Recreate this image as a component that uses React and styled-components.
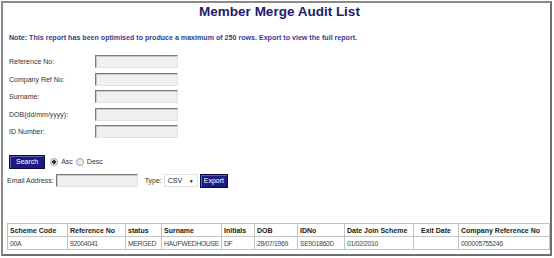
import React from 'react';
import styled, { createGlobalStyle } from 'styled-components';

const Global = createGlobalStyle`
  body {
    margin: 0;
    background: #fff;
    font-family: "Liberation Sans", Arial, sans-serif;
  }
`;

const fields = ['Reference No:', 'Company Ref No:', 'Surname:', 'DOB(dd/mm/yyyy):', 'ID Number:'];

const columns = [
  { title: 'Scheme Code', width: 60 },
  { title: 'Reference No', width: 58 },
  { title: 'status', width: 36 },
  { title: 'Surname', width: 60 },
  { title: 'Initials', width: 33 },
  { title: 'DOB', width: 43 },
  { title: 'IDNo', width: 47 },
  { title: 'Date Join Scheme', width: 69 },
  { title: 'Exit Date', width: 45, center: true },
  { title: 'Company Reference No', width: 91 },
];

const row = ['00A', '92004041', 'MERGED', 'HAUFWEDHOUSE', 'DF', '28/07/1969', 'SE901860D', '01/02/2010', '', '000005755246'];

export default function App() {
  return (
    <>
      <Global />
      <Frame>
        <Title>Member Merge Audit List</Title>
        <Note>Note: This report has been optimised to produce a maximum of 250 rows. Export to view the full report.</Note>
        <Form>
          {fields.map(f => (
            <React.Fragment key={f}>
              <Label>{f}</Label>
              <Field />
            </React.Fragment>
          ))}
        </Form>
        <Controls>
          <Button pad={6}>Search</Button>
          <Radio checked />
          <Small>Asc</Small>
          <Radio />
          <Small>Desc</Small>
        </Controls>
        <ExportRow>
          <Small>Email Address:</Small>
          <Field width={82} />
          <Small pad={5}>Type:</Small>
          <Select>
            <span>CSV</span>
            <Arrow>▼</Arrow>
          </Select>
          <Button pad={3}>Export</Button>
        </ExportRow>
        <Table>
          <colgroup>
            {columns.map(c => <col key={c.title} style={{ width: c.width }} />)}
          </colgroup>
          <thead>
            <tr>
              {columns.map(c => <Th key={c.title} center={c.center}>{c.title}</Th>)}
            </tr>
          </thead>
          <tbody>
            <tr>
              {row.map((v, i) => <Td key={i}>{v}</Td>)}
            </tr>
          </tbody>
        </Table>
      </Frame>
    </>
  );
}

const Frame = styled.div`
  margin: 1px 0 0 1px;
  width: 551px;
  height: 255px;
  box-sizing: border-box;
  border: 2px solid #8a8a8a;
  border-right-color: #6f6f6f;
  border-bottom-color: #6f6f6f;
  padding: 1px 4px 0 4px;
  display: flex;
  flex-direction: column;
`;

const Title = styled.div`
  text-align: center;
  font-weight: bold;
  font-size: 13.5px;
  line-height: 16px;
  color: #1c1c6c;
  padding-left: 6px;
`;

const Note = styled.div`
  margin-top: 13px;
  padding-left: 2px;
  font-weight: bold;
  font-size: 7.1px;
  line-height: 10px;
  color: #3b3b8e;
`;

const Form = styled.div`
  margin-top: 10px;
  padding-left: 2px;
  display: grid;
  grid-template-columns: 86px 84px;
  grid-auto-rows: 17.5px;
  align-items: center;
`;

const Label = styled.span`
  font-size: 7px;
  color: #333;
`;

const Field = styled.div`
  width: ${p => p.width || 83}px;
  height: 13px;
  box-sizing: border-box;
  background: #f0f0f0;
  border-top: 1px solid #7a7a7a;
  border-left: 1px solid #7a7a7a;
  border-right: 1px solid #e2e2e2;
  border-bottom: 1px solid #e2e2e2;
  box-shadow: inset 1px 1px 0 #c8c8c8;
`;

const Controls = styled.div`
  margin-top: 14px;
  padding-left: 2px;
  display: flex;
  align-items: center;
  gap: 3px;
`;

const ExportRow = styled.div`
  margin-top: 5px;
  display: flex;
  align-items: center;
  gap: 2px;
`;

const Small = styled.span`
  font-size: 7px;
  color: #333;
  margin-left: ${p => p.pad || 0}px;
`;

const Button = styled.button`
  margin: 0 2px 0 0;
  padding: 0 ${p => p.pad}px;
  height: 14px;
  font-family: inherit;
  font-size: 7px;
  color: #fff;
  background: #1c1c80;
  border: 1px solid #0a0a40;
  box-shadow: inset 1px 1px 0 #6060b0;
`;

const Radio = styled.span`
  width: 8px;
  height: 8px;
  box-sizing: border-box;
  border-radius: 50%;
  border: 1px solid #a0a0a0;
  background: ${p => p.checked ? 'radial-gradient(circle, #333 0 1.6px, #e8e8f0 2.2px)' : '#ececec'};
`;

const Select = styled.div`
  width: 34px;
  height: 13px;
  box-sizing: border-box;
  display: flex;
  align-items: center;
  justify-content: space-between;
  padding: 0 3px 0 3px;
  font-size: 7px;
  color: #222;
  background: #fff;
  border: 1px solid #e0e0e0;
`;

const Arrow = styled.span`
  font-size: 5px;
  color: #222;
`;

const Table = styled.table`
  margin-top: auto;
  margin-bottom: 4px;
  width: 542px;
  table-layout: fixed;
  border-collapse: collapse;
  border: 1px solid #a9a9a9;
`;

const Th = styled.th`
  height: 12px;
  padding: 0 2px;
  font-size: 7px;
  text-align: ${p => p.center ? 'center' : 'left'};
  font-weight: bold;
  color: #222;
  border: 1px solid #c4c4c4;
  white-space: nowrap;
  overflow: hidden;
`;

const Td = styled.td`
  height: 12px;
  padding: 0 2px;
  font-size: 6.8px;
  letter-spacing: -0.3px;
  color: #444;
  border: 1px solid #c4c4c4;
  white-space: nowrap;
  overflow: hidden;
`;
